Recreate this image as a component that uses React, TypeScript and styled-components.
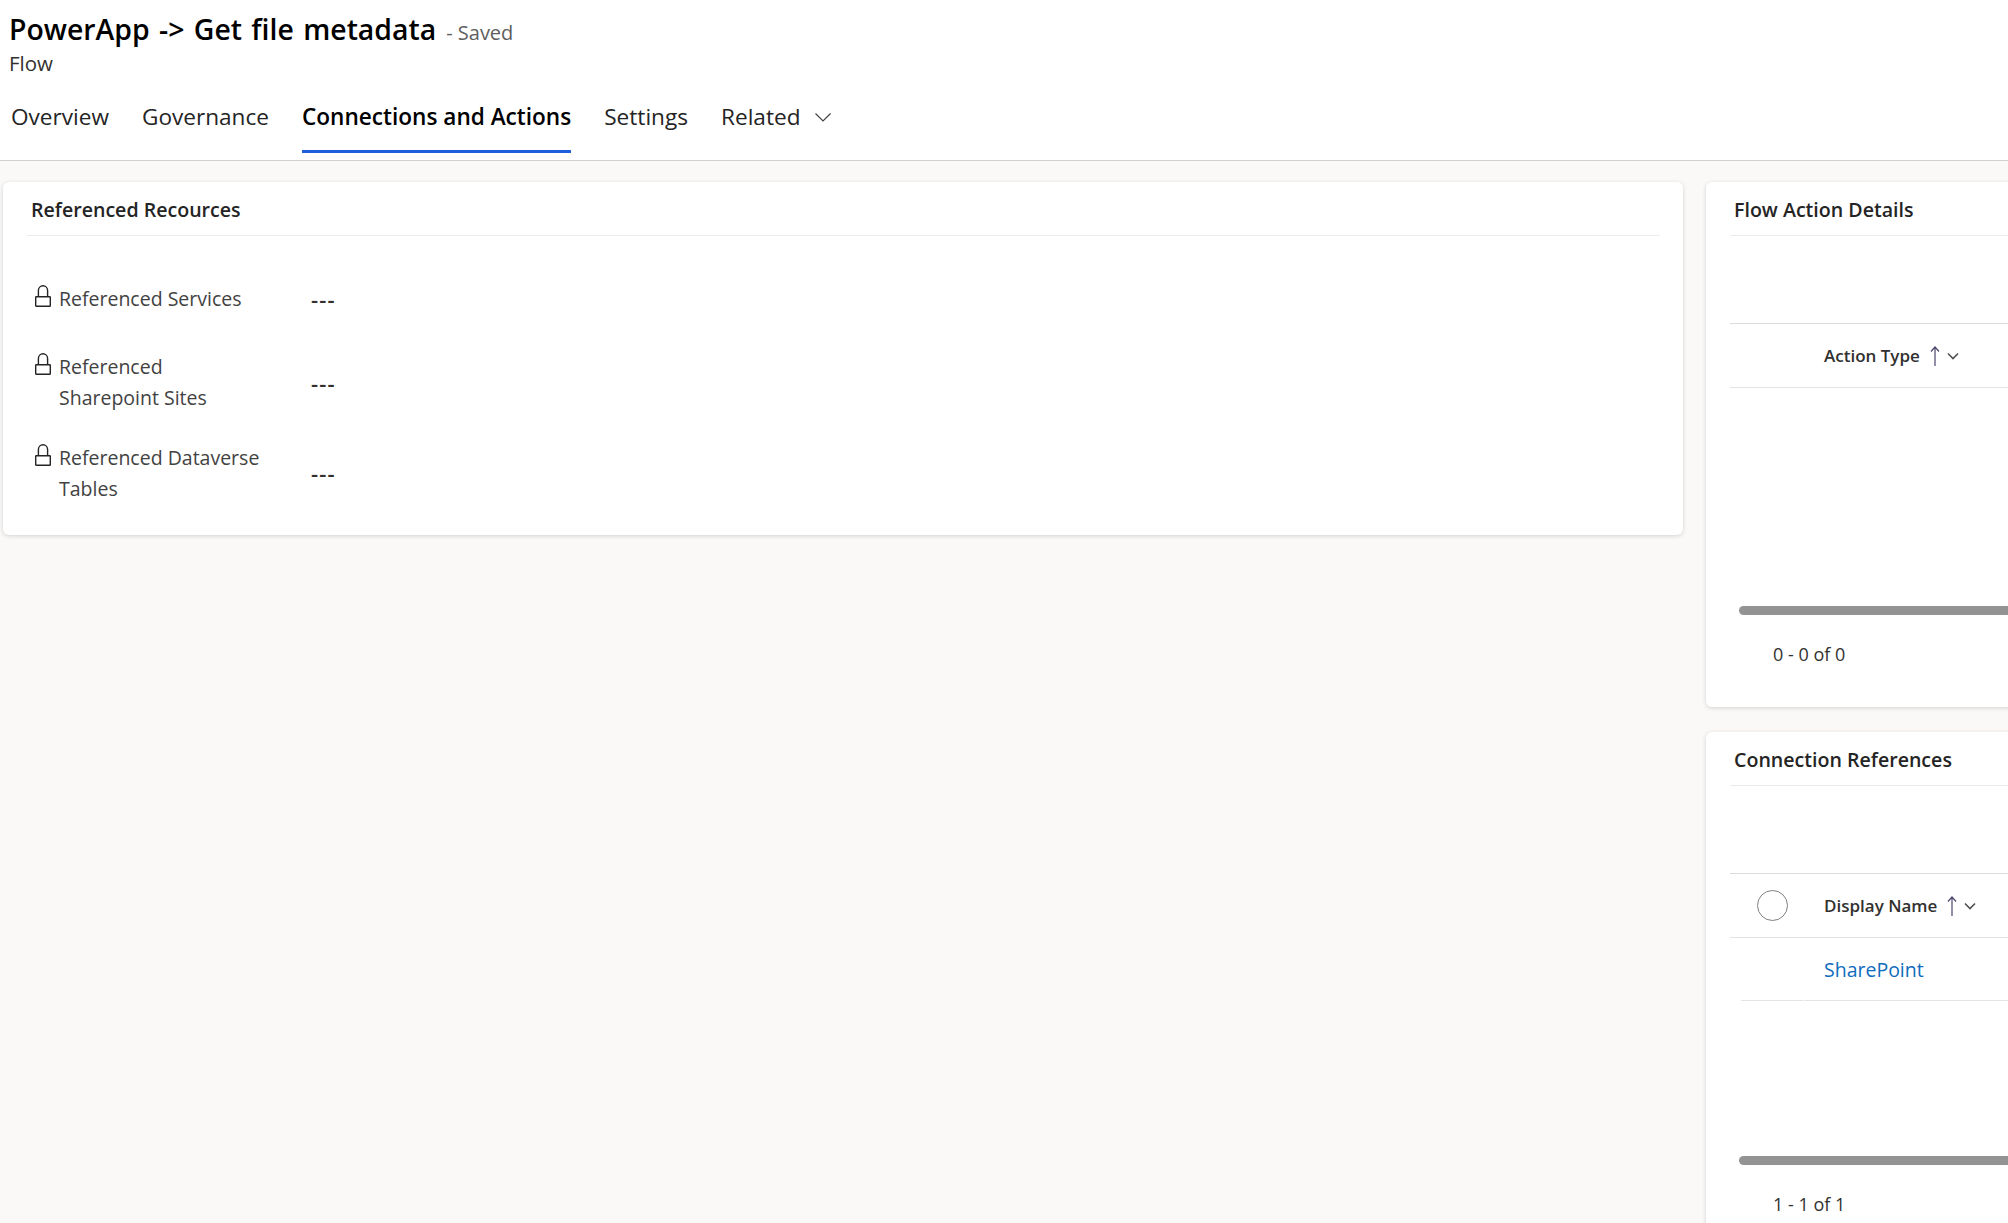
import React from "react";
import styled, { createGlobalStyle } from "styled-components";

const Global = createGlobalStyle`
  html, body { margin: 0; padding: 0; height: 100%; }
  body { font-family: "Open Sans", "Noto Sans", "Liberation Sans", sans-serif; background: #faf9f8; color: #242424; overflow: hidden; }
`;

const Page = styled.div`
  width: 2008px;
  height: 1223px;
  overflow: hidden;
  background: #faf9f8;
`;

const Header = styled.header`
  height: 161px;
  box-sizing: border-box;
  background: #fff;
  border-bottom: 1px solid #d2d0ce;
  padding-left: 9px;
  display: flex;
  flex-direction: column;
`;

const TitleRow = styled.div`
  display: flex;
  align-items: baseline;
  gap: 10px;
  height: 44px;
  padding-top: 7px;
  box-sizing: border-box;
`;

const Title = styled.h1`
  margin: 0;
  font-size: 28.4px;
  line-height: 44px;
  font-weight: 600;
  word-spacing: 2px;
  color: #000;
`;

const Saved = styled.span`
  font-size: 20px;
  color: #605e5c;
`;

const EntityType = styled.div`
  font-size: 20.5px;
  line-height: 26px;
  color: #323130;
  margin-top: 6px;
`;

const Tabs = styled.nav`
  display: flex;
  gap: 33px;
  margin-top: 26px;
`;

const Tab = styled.div<{ $active?: boolean; $first?: boolean }>`
  height: 51px;
  box-sizing: border-box;
  margin-left: ${(p) => (p.$first ? "2px" : "0")};
  font-size: 22.6px;
  line-height: 30px;
  font-weight: ${(p) => (p.$active ? 600 : 400)};
  color: ${(p) => (p.$active ? "#000" : "#242424")};
  border-bottom: 3px solid ${(p) => (p.$active ? "#1f5fdc" : "transparent")};
  display: flex;
  align-items: flex-start;
  gap: 14px;
  white-space: nowrap;
`;

const Main = styled.main`
  display: flex;
  align-items: flex-start;
  gap: 23px;
  padding: 21px 0 0 3px;
`;

const Card = styled.section`
  background: #fff;
  border-radius: 6px;
  box-shadow: 0 1px 4px rgba(0, 0, 0, 0.16);
  padding: 0 23px 0 24px;
  box-sizing: border-box;
  flex-shrink: 0;
`;

const ResourcesCard = styled(Card)`
  width: 1680px;
  height: 353px;
`;

const SideColumn = styled.div`
  display: flex;
  flex-direction: column;
  gap: 25px;
  width: 420px;
  flex-shrink: 0;
`;

const TableCard = styled(Card)`
  height: 525px;
  padding-right: 0;
  display: flex;
  flex-direction: column;
`;

const CardTitle = styled.h2`
  margin: 0;
  height: 54px;
  box-sizing: border-box;
  border-bottom: 1px solid #edebe9;
  padding-left: 4px;
  font-size: 19.6px;
  line-height: 56px;
  font-weight: 600;
  color: #242424;
  white-space: nowrap;
`;

const Fields = styled.div`
  padding-top: 29px;
  display: flex;
  flex-direction: column;
`;

const FieldRow = styled.div<{ $height: number }>`
  display: flex;
  align-items: center;
  height: ${(p) => p.$height}px;
`;

const LabelCell = styled.div`
  display: flex;
  align-items: flex-start;
  width: 284px;
  padding-left: 7px;
  box-sizing: border-box;
  flex-shrink: 0;
`;

const LockIcon = styled.svg`
  width: 18px;
  height: 22px;
  flex-shrink: 0;
  margin: 0 7px 0 0;
  align-self: flex-start;
`;

const Label = styled.div`
  font-size: 19.5px;
  line-height: 31px;
  width: 205px;
  margin-top: -2px;
  color: #424242;
`;

const Value = styled.div`
  font-size: 22px;
  font-weight: 600;
  line-height: 31px;
  color: #323130;
  letter-spacing: 1.2px;
`;

const FilterZone = styled.div`
  height: 87px;
  flex-shrink: 0;
  border-bottom: 1px solid #dcdcdc;
`;

const HeadRow = styled.div`
  height: 64px;
  box-sizing: border-box;
  flex-shrink: 0;
  border-bottom: 1px solid #e3e3e3;
  display: flex;
  align-items: center;
`;

const SelectCell = styled.div`
  width: 94px;
  flex-shrink: 0;
  display: flex;
  justify-content: center;
  padding-right: 10px;
  box-sizing: border-box;
`;

const SelectCircle = styled.div`
  width: 29px;
  height: 29px;
  border-radius: 50%;
  border: 1px solid #808080;
  box-sizing: content-box;
`;

const HeadCell = styled.div`
  display: flex;
  align-items: center;
  font-size: 17px;
  font-weight: 600;
  color: #323130;
  white-space: nowrap;
`;

const SortIcon = styled.svg`
  width: 12px;
  height: 22px;
  margin-left: 9px;
`;

const ChevronIcon = styled.svg`
  width: 14px;
  height: 10px;
  margin-left: 5px;
`;

const DataRow = styled.div`
  height: 63px;
  flex-shrink: 0;
  display: flex;
  align-items: center;
  padding-left: 94px;
  position: relative;
`;

const RowRule = styled.div`
  position: absolute;
  left: 11px;
  right: 0;
  bottom: 0;
  height: 1px;
  background: linear-gradient(to right, #e3e3e3 63px, #fff 63px, #fff 64px, #e3e3e3 64px);
`;

const RowLink = styled.a`
  font-size: 19.5px;
  color: #0f6cbd;
  text-decoration: none;
`;

const Spacer = styled.div<{ $height: number }>`
  height: ${(p) => p.$height}px;
  flex-shrink: 0;
`;

const Scrollbar = styled.div`
  height: 9px;
  margin-left: 9px;
  border-radius: 5px 0 0 5px;
  background: #939393;
  flex-shrink: 0;
`;

const Pager = styled.div`
  margin-top: 27px;
  padding-left: 43px;
  font-size: 18px;
  line-height: 24px;
  color: #323130;
`;

const Lock = () => (
  <LockIcon viewBox="0 0 18 22" fill="none" stroke="#242424" strokeWidth="1.4">
    <rect x="1.7" y="11.7" width="14.6" height="9.6" rx="0.6" />
    <path d="M4.4 11.5V5.6a4.6 4.9 0 0 1 9.2 0v5.9" />
  </LockIcon>
);

const SortUp = () => (
  <SortIcon viewBox="0 0 12 22" fill="none" stroke="#4f4470" strokeWidth="1.2">
    <path d="M6 21V2M2 6.5 6 2l4 4.5" />
  </SortIcon>
);

const Chevron = () => (
  <ChevronIcon viewBox="0 0 14 10" fill="none" stroke="#505050" strokeWidth="1.6">
    <path d="M2 2.5 7 7.5l5-5" />
  </ChevronIcon>
);

const TabChevron = () => (
  <svg width="18" height="30" viewBox="0 0 18 30" fill="none" stroke="#424242" strokeWidth="1.2">
    <path d="M1.5 11.5 9 19l7.5-7.5" />
  </svg>
);

const fields = [
  { label: "Referenced Services", height: 68 },
  { label: "Referenced Sharepoint Sites", height: 100 },
  { label: "Referenced Dataverse Tables", height: 81 },
];

export default function App() {
  return (
    <Page>
      <Global />
      <Header>
        <TitleRow>
          <Title>PowerApp -&gt; Get file metadata</Title>
          <Saved>- Saved</Saved>
        </TitleRow>
        <EntityType>Flow</EntityType>
        <Tabs>
          <Tab $first>Overview</Tab>
          <Tab>Governance</Tab>
          <Tab $active>Connections and Actions</Tab>
          <Tab>Settings</Tab>
          <Tab>
            Related
            <TabChevron />
          </Tab>
        </Tabs>
      </Header>
      <Main>
        <ResourcesCard>
          <CardTitle>Referenced Recources</CardTitle>
          <Fields>
            {fields.map((f) => (
              <FieldRow key={f.label} $height={f.height}>
                <LabelCell>
                  <Lock />
                  <Label>{f.label}</Label>
                </LabelCell>
                <Value>---</Value>
              </FieldRow>
            ))}
          </Fields>
        </ResourcesCard>
        <SideColumn>
          <TableCard>
            <CardTitle>Flow Action Details</CardTitle>
            <FilterZone />
            <HeadRow>
              <SelectCell />
              <HeadCell>
                Action Type
                <SortUp />
                <Chevron />
              </HeadCell>
            </HeadRow>
            <Spacer $height={218} />
            <Scrollbar />
            <Pager>0 - 0 of 0</Pager>
          </TableCard>
          <TableCard>
            <CardTitle>Connection References</CardTitle>
            <FilterZone />
            <HeadRow>
              <SelectCell>
                <SelectCircle />
              </SelectCell>
              <HeadCell>
                Display Name
                <SortUp />
                <Chevron />
              </HeadCell>
            </HeadRow>
            <DataRow>
              <RowLink>SharePoint</RowLink>
              <RowRule />
            </DataRow>
            <Spacer $height={155} />
            <Scrollbar />
            <Pager>1 - 1 of 1</Pager>
          </TableCard>
        </SideColumn>
      </Main>
    </Page>
  );
}
